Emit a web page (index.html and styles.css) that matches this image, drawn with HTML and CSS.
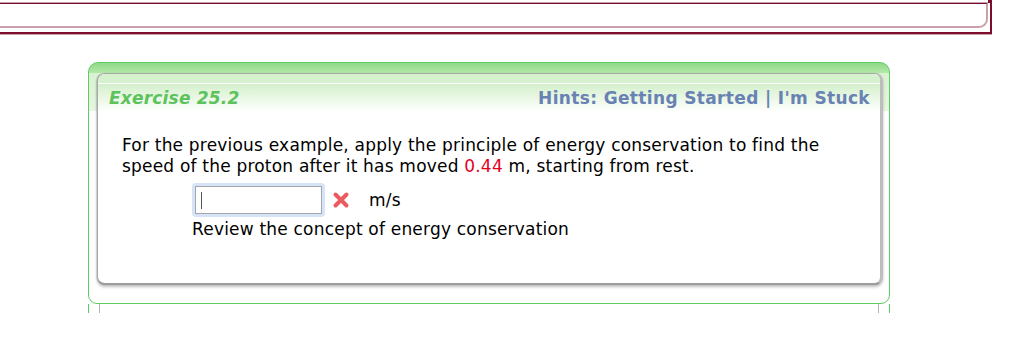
FILE: index.html
```html
<!DOCTYPE html>
<html lang="en">
<head>
    <meta charset="UTF-8">
    <title>Exercise 25.2</title>
    <link rel="stylesheet" href="styles.css">
</head>
<body>
    <div class="top-frame">
        <div class="top-inner"></div>
    </div>

    <div class="exercise">
        <div class="ex-frame">
            <div class="ex-box">
                <div class="ex-strip"></div>
                <div class="ex-header">
                    <span class="ex-title">Exercise 25.2</span>
                    <span class="ex-hints">Hints: Getting Started | I'm Stuck</span>
                </div>
                <div class="ex-body">
                    <p class="question">For the previous example, apply the principle of energy conservation to find the speed of the proton after it has moved <span class="given">0.44</span> m, starting from rest.</p>
                    <div class="answer">
                        <div class="answer-row">
                            <span class="input-glow"><span class="answer-input"><span class="caret"></span></span></span>
                            <svg class="wrong" viewBox="0 0 18 18" width="18" height="18">
                                <line x1="3.5" y1="3.5" x2="14.5" y2="14.5"></line>
                                <line x1="14.5" y1="3.5" x2="3.5" y2="14.5"></line>
                            </svg>
                            <span class="unit">m/s</span>
                        </div>
                        <div class="feedback">Review the concept of energy conservation</div>
                    </div>
                </div>
            </div>
        </div>
        <div class="ex-foot"><div class="ex-foot-inner"></div></div>
    </div>

    <div class="page-rule"></div>
</body>
</html>
```

FILE: styles.css
```css
:root {
    --maroon: #7d0d2c;
    --maroon-light: #c9a1ac;
    --green: #5fcc5f;
    --green-title: #5cc35c;
    --hint-blue: #6882b3;
    --box-border: #a9a9a9;
}

* {
    margin: 0;
    padding: 0;
    box-sizing: border-box;
}

body {
    background: #ffffff;
    color: #000000;
    font-family: "DejaVu Sans", Verdana, sans-serif;
    width: 1024px;
    height: 337px;
    overflow: hidden;
}

/* previous problem frame, cut off at the top */
.top-frame {
    width: 992px;
    height: 34px;
    border-right: 2px solid var(--maroon);
    border-bottom: 2px solid var(--maroon);
    box-shadow: 0 1px 0 var(--maroon-light);
    padding-top: 3px;
    padding-right: 2px;
    position: relative;
}

.top-frame::before {
    content: "";
    position: absolute;
    right: -2px;
    top: 0;
    width: 4px;
    height: 3px;
    background: var(--maroon);
}

.top-inner {
    height: 25px;
    border-top: 1px solid var(--maroon);
    border-right: 2px solid var(--maroon-light);
    border-bottom: 2px solid var(--maroon-light);
    border-bottom-right-radius: 9px;
    box-shadow: 0 -1px 0 var(--maroon-light);
}

/* exercise box */
.exercise {
    margin-top: 28px;
    margin-left: 88px;
    width: 802px;
}

.ex-frame {
    border: 1px solid var(--green);
    border-radius: 10px 10px 9px 9px;
    padding: 10px 6px 18px 8px;
    background: linear-gradient(to bottom,
        #8fd986 0, #b3e8a9 10px,
        #d9f2d2 10px, #e6f6e1 48px,
        #ffffff 48px);
}

.ex-box {
    height: 212px;
    background: #ffffff;
    border: 1px solid var(--box-border);
    border-right: 3px solid #bdbdbd;
    border-bottom: 2px solid #9c9c9c;
    border-radius: 8px;
    box-shadow: 0 2px 3px rgba(0, 0, 0, 0.25), -1px 0 1px rgba(0, 0, 0, 0.12);
    overflow: hidden;
}

.ex-strip {
    height: 10px;
    background: #d6f1ce;
    border-bottom: 1px solid #ffffff;
}

.ex-header {
    height: 28px;
    display: flex;
    align-items: center;
    justify-content: space-between;
    padding: 0 10px 0 11px;
    background: linear-gradient(to bottom, #d4f0cb, #ffffff);
    font-size: 17px;
    font-weight: bold;
    letter-spacing: 0.2px;
}

.ex-title {
    color: var(--green-title);
    font-style: italic;
}

.ex-hints {
    color: var(--hint-blue);
    letter-spacing: 0.35px;
}

.ex-body {
    padding: 23px 30px 0 24px;
    font-size: 17px;
    letter-spacing: 0.2px;
}

.question {
    line-height: 21px;
}

.given {
    color: #e3001f;
}

.answer {
    padding-left: 70px;
    margin-top: 6px;
}

.answer-row {
    display: flex;
    align-items: center;
    height: 34px;
}

.input-glow {
    display: block;
    padding: 3px;
    border-radius: 4px;
    background: #d6e4f7;
}

.answer-input {
    display: flex;
    align-items: center;
    width: 127px;
    height: 28px;
    background: #ffffff;
    border: 1px solid #a7a7a7;
    padding-left: 5px;
}

.caret {
    width: 1px;
    height: 17px;
    background: #555555;
}

.wrong {
    margin-left: 7px;
    stroke: #ec5b60;
    stroke-width: 4;
    stroke-linecap: round;
}

.unit {
    margin-left: 19px;
}

.feedback {
    line-height: 22px;
    margin-top: 1px;
}

.ex-foot {
    height: 9px;
    border-left: 1px solid var(--green);
    border-right: 1px solid var(--green);
    padding: 0 10px 0 10px;
}

.ex-foot-inner {
    height: 100%;
    border-left: 1px solid #b5b5b5;
    border-right: 1px solid #b5b5b5;
}

.page-rule {
    margin-top: 24px;
    margin-left: 524px;
    border-top: 1px solid #d4d4d4;
}
```
